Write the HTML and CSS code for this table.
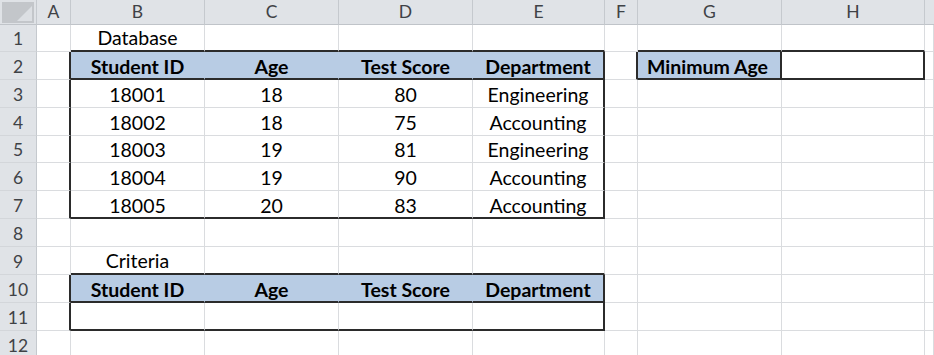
FILE: index.html
```html
<!DOCTYPE html>
<html>
<head>
<meta charset="utf-8">
<link rel="stylesheet" href="styles.css">
</head>
<body>
<div class="sheet">
  <!-- header row -->
  <div class="corner"><svg width="36" height="25" viewBox="0 0 36 25"><rect x="0" y="0" width="36" height="25" fill="#dfe2e6"/><rect x="2" y="2" width="32" height="21" fill="#c3c6ca"/><polygon points="17,21 32,6 32,21" fill="#dcdfe3"/></svg></div>
  <div class="ch">A</div><div class="ch">B</div><div class="ch">C</div><div class="ch">D</div><div class="ch">E</div><div class="ch">F</div><div class="ch">G</div><div class="ch">H</div><div class="ch last"></div>

  <!-- row 1 -->
  <div class="rh">1</div><div class="c"></div><div class="c tb">Database</div><div class="c tb"></div><div class="c tb"></div><div class="c tb"></div><div class="c"></div><div class="c tb"></div><div class="c tb"></div><div class="c"></div>

  <!-- row 2 -->
  <div class="rh">2</div><div class="c rb"></div><div class="c hd hr bb">Student ID</div><div class="c hd hr bb">Age</div><div class="c hd hr bb">Test Score</div><div class="c hd rb bb">Department</div><div class="c rb"></div><div class="c hd rb bb left">Minimum Age</div><div class="c rb bb"></div><div class="c"></div>

  <!-- row 3 -->
  <div class="rh">3</div><div class="c rb"></div><div class="c">18001</div><div class="c">18</div><div class="c">80</div><div class="c rb">Engineering</div><div class="c"></div><div class="c"></div><div class="c"></div><div class="c"></div>

  <!-- row 4 -->
  <div class="rh">4</div><div class="c rb"></div><div class="c">18002</div><div class="c">18</div><div class="c">75</div><div class="c rb">Accounting</div><div class="c"></div><div class="c"></div><div class="c"></div><div class="c"></div>

  <!-- row 5 -->
  <div class="rh">5</div><div class="c rb"></div><div class="c">18003</div><div class="c">19</div><div class="c">81</div><div class="c rb">Engineering</div><div class="c"></div><div class="c"></div><div class="c"></div><div class="c"></div>

  <!-- row 6 -->
  <div class="rh">6</div><div class="c rb"></div><div class="c">18004</div><div class="c">19</div><div class="c">90</div><div class="c rb">Accounting</div><div class="c"></div><div class="c"></div><div class="c"></div><div class="c"></div>

  <!-- row 7 -->
  <div class="rh">7</div><div class="c rb"></div><div class="c bb">18005</div><div class="c bb">20</div><div class="c bb">83</div><div class="c rb bb">Accounting</div><div class="c"></div><div class="c"></div><div class="c"></div><div class="c"></div>

  <!-- row 8 -->
  <div class="rh">8</div><div class="c"></div><div class="c"></div><div class="c"></div><div class="c"></div><div class="c"></div><div class="c"></div><div class="c"></div><div class="c"></div><div class="c"></div>

  <!-- row 9 -->
  <div class="rh">9</div><div class="c"></div><div class="c tb">Criteria</div><div class="c tb"></div><div class="c tb"></div><div class="c tb"></div><div class="c"></div><div class="c"></div><div class="c"></div><div class="c"></div>

  <!-- row 10 -->
  <div class="rh">10</div><div class="c rb"></div><div class="c hd hr bb">Student ID</div><div class="c hd hr bb">Age</div><div class="c hd hr bb">Test Score</div><div class="c hd rb bb">Department</div><div class="c"></div><div class="c"></div><div class="c"></div><div class="c"></div>

  <!-- row 11 -->
  <div class="rh">11</div><div class="c rb"></div><div class="c bb"></div><div class="c bb"></div><div class="c bb"></div><div class="c rb bb"></div><div class="c"></div><div class="c"></div><div class="c"></div><div class="c"></div>

  <!-- row 12 -->
  <div class="rh">12</div><div class="c"></div><div class="c"></div><div class="c"></div><div class="c"></div><div class="c"></div><div class="c"></div><div class="c"></div><div class="c"></div><div class="c"></div>
</div>
</body>
</html>
```

FILE: styles.css
```css
html, body {
  margin: 0;
  padding: 0;
  background: #ffffff;
  overflow: hidden;
}

.sheet {
  width: 934px;
  height: 355px;
  overflow: hidden;
  display: grid;
  grid-template-columns: 37px 34px 134px 134px 134px 132px 33px 144px 143px 1fr;
  grid-template-rows: 25px 27px 28px 28px 28px 27px 28px 28px 28px 28px 28px 28px 28px;
  font-family: "Lato", "Open Sans", sans-serif;
  font-size: 19.5px;
  color: #000;
}

.corner {
  border-right: 1px solid #c5c9ce;
  border-bottom: 1px solid #c0c4c9;
  box-sizing: border-box;
  overflow: hidden;
  line-height: 0;
}

.ch {
  box-sizing: border-box;
  background: #e0e3e7;
  border-right: 1px solid #c5c9ce;
  border-bottom: 1px solid #c0c4c9;
  color: #3f4246;
  font-size: 17.5px;
  display: flex;
  align-items: center;
  justify-content: center;
  line-height: 20px;
}

.ch.last {
  border-right: none;
}

.rh {
  box-sizing: border-box;
  background: #e0e3e7;
  border-right: 1px solid #c5c9ce;
  border-bottom: 1px solid #d3d6da;
  color: #3f4246;
  font-size: 17.5px;
  display: flex;
  align-items: flex-end;
  justify-content: center;
  line-height: 22px;
  padding-bottom: 1px;
}

.c {
  box-sizing: border-box;
  border-right: 1px solid #dadcdf;
  border-bottom: 1px solid #dadcdf;
  display: flex;
  align-items: flex-end;
  justify-content: center;
  line-height: 22px;
  padding-bottom: 1px;
  white-space: nowrap;
  overflow: hidden;
}

.hd {
  background: #b8cce4;
  font-weight: bold;
}

.hr {
  border-right-color: #b8cce4;
}

.tb {
  border-bottom: 2px solid #2b2b2b;
}

.bb {
  border-bottom: 2px solid #2b2b2b;
  padding-bottom: 0;
}

.rb {
  border-right: 2px solid #2b2b2b;
}

.left {
  justify-content: flex-start;
  padding-left: 9px;
}
```
